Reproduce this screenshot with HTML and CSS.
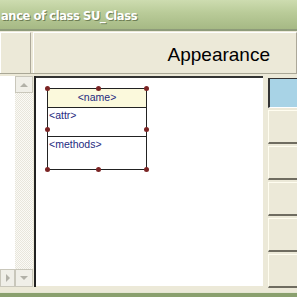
FILE: index.html
```html
<!DOCTYPE html>
<html>
<head>
<meta charset="utf-8">
<link rel="stylesheet" href="styles.css">
</head>
<body>
<div class="window">
  <div class="title"><span class="title-text">ance of class SU_Class</span></div>
  <div class="header">
    <div class="hcell hcell-left"></div>
    <div class="hcell hcell-main"><span class="htext">Appearance</span></div>
  </div>
  <div class="body">
    <div class="leftpane">
      <div class="leftlist"></div>
      <div class="vscroll">
        <div class="sbtn up"><span class="arrow-up"></span></div>
        <div class="track"></div>
      </div>
      <div class="hscroll">
        <div class="sbtn right"><span class="arrow-right"></span></div>
        <div class="sbtn down"><span class="arrow-down"></span></div>
      </div>
    </div>
    <div class="canvas">
      <div class="node">
        <div class="sec sec-name">&lt;name&gt;</div>
        <div class="sec sec-attr">&lt;attr&gt;</div>
        <div class="sec sec-methods">&lt;methods&gt;</div>
        <span class="h h-tl"></span><span class="h h-tc"></span><span class="h h-tr"></span>
        <span class="h h-ml"></span><span class="h h-mr"></span>
        <span class="h h-bl"></span><span class="h h-bc"></span><span class="h h-br"></span>
      </div>
    </div>
    <div class="rightcol">
      <div class="rbtn active"></div>
      <div class="rbtn"></div>
      <div class="rbtn"></div>
      <div class="rbtn"></div>
      <div class="rbtn"></div>
      <div class="rbtn"></div>
    </div>
  </div>
  <div class="footer"></div>
</div>
</body>
</html>
```

FILE: styles.css
```css
html, body { margin: 0; padding: 0; }
body { width: 297px; height: 297px; overflow: hidden; background: #ece9d8; }
.window { width: 297px; height: 297px; display: flex; flex-direction: column; }

.title {
  height: 29px;
  background: linear-gradient(#cddcb0 0%, #b9cb98 45%, #a6b985 100%);
  border-bottom: 2px solid #8e9b7a;
  display: flex; align-items: center;
}
.title-text {
  font-family: "DejaVu Sans", sans-serif; font-weight: bold; font-size: 11.5px;
  color: #fff; padding-left: 1px; padding-top: 3px;
  text-shadow: 1px 1px 0 #6f7f55;
  letter-spacing: -0.4px;
}

.header { height: 42px; display: flex; gap: 2px; background: #ece9d8; border-bottom: 1px solid #a9a796; }
.hcell { border-top: 1px solid #fff; border-left: 1px solid #fff; border-right: 1px solid #aca899; background: #ece9d8; margin-top: 1px; }
.hcell-left { width: 29px; }
.hcell-main { flex: 1; display: flex; align-items: center; justify-content: flex-end; padding-right: 26px; }
.htext { font-family: "Liberation Sans", Arial, sans-serif; font-size: 19px; color: #000; padding-top: 4px; }

.body { flex: 1; display: flex; min-height: 0; padding-top: 2px; }
.leftpane { width: 34px; position: relative; display: grid; grid-template-columns: 15px 18px; grid-template-rows: 1fr 18px; border-right: 2px solid #222; height: 211px; }
.leftlist { background: #fff; grid-column: 1; grid-row: 1; }
.vscroll { grid-column: 2; grid-row: 1; display: flex; flex-direction: column;
  background-color: #f5f4ee;
  background-image: repeating-conic-gradient(#e8e6dc 0 25%, #fbfaf6 0 50%);
  background-size: 2px 2px; }
.hscroll { grid-column: 1 / 3; grid-row: 2; display: flex; background: #f3f2ec; }
.sbtn { background: #f0efe8; border: 1px solid #c9c7bb; display: flex; align-items: center; justify-content: center; box-sizing: border-box; }
.up { height: 17px; }
.right { width: 15px; height: 18px; }
.down { width: 18px; height: 18px; }
.arrow-up { width: 0; height: 0; border-left: 4px solid transparent; border-right: 4px solid transparent; border-bottom: 4px solid #b2b1a8; }
.arrow-down { width: 0; height: 0; border-left: 4px solid transparent; border-right: 4px solid transparent; border-top: 4px solid #b2b1a8; }
.arrow-right { width: 0; height: 0; border-top: 4px solid transparent; border-bottom: 4px solid transparent; border-left: 4px solid #b2b1a8; }
.track { flex: 1; }

.canvas { width: 227px; height: 208px; background: #fff; border-top: 2px solid #333; position: relative; margin-top: 0; }

.node { position: absolute; left: 11px; top: 10px; width: 100px; height: 82px; border: 1px solid #222; box-sizing: border-box; display: flex; flex-direction: column; }
.sec { font-family: "Liberation Sans", Arial, sans-serif; font-size: 10.5px; color: #1e2a80; border-bottom: 1px solid #222; }
.sec-name { height: 18px; background: #fbf9dc; text-align: center; line-height: 17px; }
.sec-attr { height: 28px; padding-left: 1px; line-height: 14px; }
.sec-methods { flex: 1; border-bottom: none; padding-left: 1px; line-height: 14px; }
.h { position: absolute; width: 5px; height: 5px; border-radius: 50%; background: #7b2424; }
.h-tl { left: -3px; top: -3px; } .h-tc { left: 48px; top: -3px; } .h-tr { right: -3px; top: -3px; }
.h-ml { left: -3px; top: 38px; } .h-mr { right: -3px; top: 38px; }
.h-bl { left: -3px; bottom: -3px; } .h-bc { left: 48px; bottom: -3px; } .h-br { right: -3px; bottom: -3px; }

.rightcol { flex: 1; margin-left: 5px; display: flex; flex-direction: column; gap: 2px; padding-top: 2px; }
.rbtn { height: 32px; background: #ece9d8; border-top: 1px solid #fffdf0; border-left: 1px solid #fffdf0; border-bottom: 2px solid #6f6c60; }
.rbtn.active { height: 29px; background: #a8d3e6; border-left: 2px solid #333; border-top: 1px solid #333; border-bottom: 1px solid #fff; }

.footer { height: 9px; background: linear-gradient(#ece9d8 0 4px, #e4e6d2 4px 5px, #8aa06e 5px); }
```
